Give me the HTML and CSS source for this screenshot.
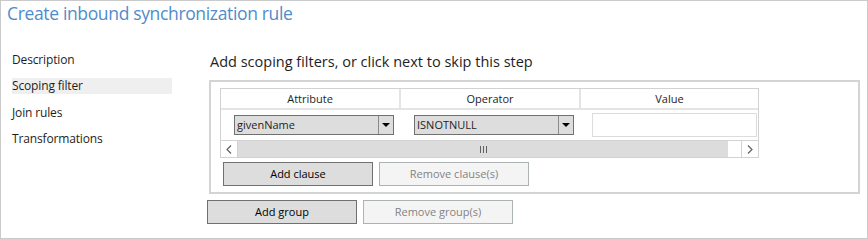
FILE: index.html
```html
<!DOCTYPE html>
<html>
<head>
  <meta charset="UTF-8">
  <link rel="stylesheet" href="styles.css">
</head>
<body>
  <div class="window">
    <div class="title">Create inbound synchronization rule</div>

    <div class="content">
      <!-- wizard steps -->
      <div class="nav">
        <div class="nav-item">Description</div>
        <div class="nav-item selected">Scoping filter</div>
        <div class="nav-item">Join rules</div>
        <div class="nav-item">Transformations</div>
      </div>

      <div class="main">
        <div class="heading">Add scoping filters, or click next to skip this step</div>

        <div class="group-box">
          <div class="grid">
            <div class="grid-header">
              <div class="col">Attribute</div>
              <div class="col">Operator</div>
              <div class="col last">Value</div>
            </div>
            <div class="grid-row">
              <div class="cell">
                <div class="combo"><span class="combo-text">givenName</span><span class="combo-btn"><span class="arrow"></span></span></div>
              </div>
              <div class="cell">
                <div class="combo"><span class="combo-text">ISNOTNULL</span><span class="combo-btn"><span class="arrow"></span></span></div>
              </div>
              <div class="cell value-cell">
                <div class="textbox"></div>
              </div>
            </div>
            <div class="hscroll">
              <div class="scroll-btn">
                <svg width="6" height="9" viewBox="0 0 6 9"><path d="M5 0.5 L1 4.5 L5 8.5" fill="none" stroke="#606060" stroke-width="1.2"/></svg>
              </div>
              <div class="thumb">
                <svg width="7" height="7" viewBox="0 0 7 7"><path d="M0.5 0 V7 M3.5 0 V7 M6.5 0 V7" stroke="#606060" stroke-width="1"/></svg>
              </div>
              <div class="track"></div>
              <div class="scroll-btn right">
                <svg width="6" height="9" viewBox="0 0 6 9"><path d="M1 0.5 L5 4.5 L1 8.5" fill="none" stroke="#606060" stroke-width="1.2"/></svg>
              </div>
            </div>
          </div>
          <div class="button-row inner">
            <div class="btn">Add clause</div>
            <div class="btn disabled">Remove clause(s)</div>
          </div>
        </div>

        <div class="button-row">
          <div class="btn">Add group</div>
          <div class="btn disabled">Remove group(s)</div>
        </div>
      </div>
    </div>
  </div>
</body>
</html>
```

FILE: styles.css
```css
body { margin: 0; background: #ffffff; font-family: "Open Sans", "Noto Sans", sans-serif; color: #1e1e1e; }
.window { width: 868px; height: 239px; box-sizing: border-box; border: 1px solid #cacaca; background: #ffffff; }

.title { height: 39px; padding-left: 6px; font-size: 17.5px; line-height: 25px; color: #4f8ccb; letter-spacing: -0.35px; }

.content { display: flex; padding-top: 12px; }

.nav { width: 195px; padding-left: 11px; }
.nav-item { width: 160px; height: 16px; line-height: 16px; font-size: 12px; margin-bottom: 10.3px; letter-spacing: -0.15px; }
.nav-item.selected { background: #efefef; }

.main { display: flex; flex-direction: column; align-items: flex-start; }
.heading { padding-left: 3px; font-size: 14.5px; line-height: 20px; height: 20px; margin-bottom: 8px; color: #1e1e1e; letter-spacing: 0; }

.group-box { margin-left: 2px; width: 651px; height: 114px; box-sizing: border-box; border: 2px solid #d4d4d4; padding: 6px 0 0 9px; }

.grid { width: 539px; box-sizing: border-box; border: 1px solid #d2d2d2; }
.grid-header { display: flex; height: 19px; border-bottom: 2px solid #e4e4e4; }
.col { width: 178px; border-right: 2px solid #e4e4e4; text-align: center; font-size: 11px; line-height: 19px; }
.col.last { border-right: none; flex: 1; }

.grid-row { display: flex; height: 30px; align-items: center; }
.cell { width: 180px; box-sizing: border-box; padding-left: 13px; }
.value-cell { padding-left: 11px; width: 177px; }

.combo { display: flex; width: 160px; height: 20px; box-sizing: border-box; border: 1px solid #707070; background: #dddddd; font-size: 11px; line-height: 18px; }
.combo-text { flex: 1; padding-left: 2px; }
.combo-btn { width: 14px; border-left: 1px solid #8a8a8a; display: flex; align-items: center; justify-content: center; }
.arrow { width: 0; height: 0; border-left: 4px solid transparent; border-right: 4px solid transparent; border-top: 4px solid #000000; }

.textbox { width: 165px; height: 24px; box-sizing: border-box; border: 1px solid #dcdcdc; background: #ffffff; }

.hscroll { display: flex; height: 16px; border-top: 1px solid #d2d2d2; }
.scroll-btn { width: 16px; display: flex; align-items: center; justify-content: center; background: #ffffff; border-right: 1px solid #d2d2d2; }
.scroll-btn.right { border-right: none; border-left: 1px solid #d2d2d2; }
.thumb { width: 490px; background: #dcdcdc; display: flex; align-items: center; justify-content: center; }
.track { flex: 1; background: #ffffff; }

.button-row { display: flex; gap: 6px; margin-top: 6px; }
.button-row.inner { margin-top: 4px; margin-left: 3px; }
.btn { width: 150px; height: 24px; box-sizing: border-box; border: 1px solid #707070; background: #dddddd; text-align: center; font-size: 11px; line-height: 22px; color: #000000; }
.btn.disabled { background: #f4f4f4; border-color: #adb2b5; color: #838383; }
```
